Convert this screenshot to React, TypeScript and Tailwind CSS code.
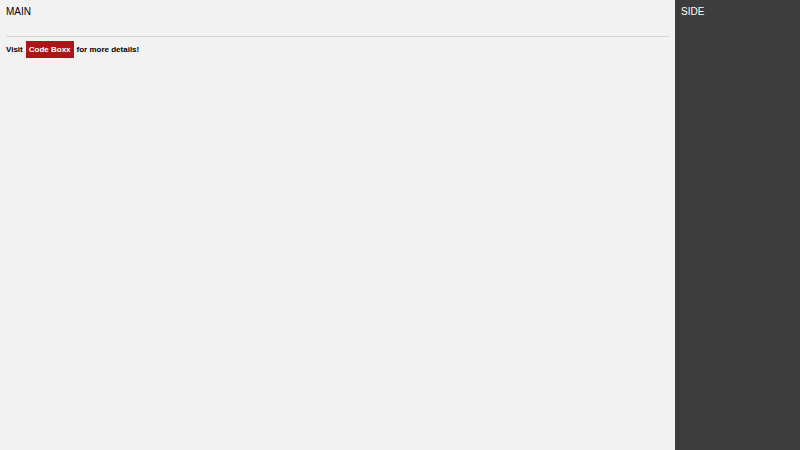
export default function App() {
  return (
    <div className="flex h-[450px] w-[800px] overflow-hidden" style={{ fontFamily: '"Liberation Sans", Arial, sans-serif' }}>
      <div className="flex-1 bg-[#f2f2f2] px-[6px] pt-[6px]">
        <div className="text-[10px] leading-[12px] text-black">MAIN</div>
        <div className="mt-[18px] border-t border-[#d6d6d6]" />
        <div className="mt-[4px] flex items-center text-[8px] font-bold text-black">
          <span>Visit</span>
          <span className="mx-[3px] bg-[#a81818] px-[3px] py-[4px] leading-[9px] text-white">Code Boxx</span>
          <span>for more details!</span>
        </div>
      </div>
      <div className="w-[125px] bg-[#3d3d3d] px-[6px] pt-[6px]">
        <div className="text-[10px] leading-[12px] text-white">SIDE</div>
      </div>
    </div>
  );
}
